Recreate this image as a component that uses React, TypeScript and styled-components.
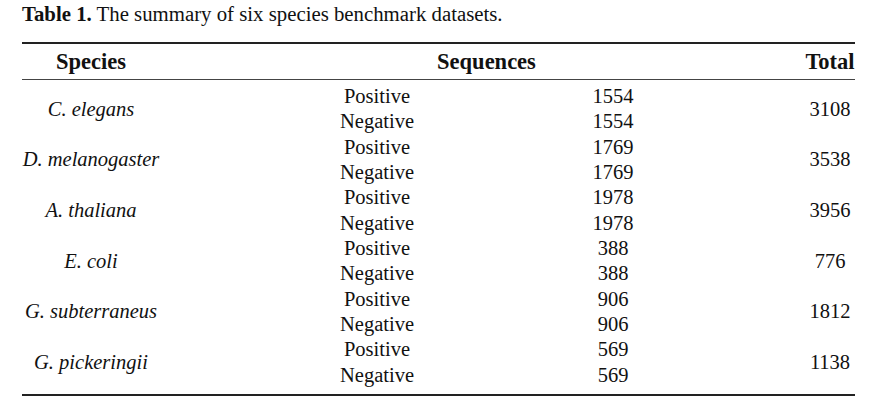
import React from "react";
import styled, { createGlobalStyle } from "styled-components";

const Global = createGlobalStyle`
  html, body { margin: 0; padding: 0; background: #fff; }
  body { font-family: "Liberation Serif", "Times New Roman", serif; color: #111; }
`;

const Page = styled.div`
  width: 880px;
  height: 411px;
  box-sizing: border-box;
  padding: 3px 25px 0 22px;
`;

const Caption = styled.div`
  font-size: 20.8px;
  line-height: 22px;
  height: 39px;
  b { font-weight: 700; }
`;

const Table = styled.div`
  display: flex;
  flex-direction: column;
  border-top: 2px solid #222;
  border-bottom: 2px solid #222;
`;

const Grid = styled.div`
  display: grid;
  grid-template-columns: 138px 160px 114px 139px 80px 152px 50px;
`;

const Head = styled(Grid)`
  height: 35px;
  border-bottom: 1px solid #444;
  font-weight: 700;
  font-size: 22.5px;
  align-items: center;
`;

const Body = styled(Grid)`
  grid-auto-rows: 25.33px;
  padding: 4px 0 6px;
  font-size: 20.5px;
`;

const HeadCell = styled.div<{ $col: string }>`
  grid-column: ${(p) => p.$col};
  display: flex;
  justify-content: center;
  white-space: nowrap;
`;

const Cell = styled.div<{ $col: string; $row: number; $span?: number; $italic?: boolean }>`
  grid-column: ${(p) => p.$col};
  grid-row: ${(p) => p.$row} / span ${(p) => p.$span ?? 1};
  display: flex;
  align-items: center;
  justify-content: center;
  white-space: nowrap;
  font-style: ${(p) => (p.$italic ? "italic" : "normal")};
`;

const data = [
  { sp: "C. elegans", n: 1554, t: 3108 },
  { sp: "D. melanogaster", n: 1769, t: 3538 },
  { sp: "A. thaliana", n: 1978, t: 3956 },
  { sp: "E. coli", n: 388, t: 776 },
  { sp: "G. subterraneus", n: 906, t: 1812 },
  { sp: "G. pickeringii", n: 569, t: 1138 },
];

export default function App() {
  return (
    <Page>
      <Global />
      <Caption>
        <b>Table 1.</b> The summary of six species benchmark datasets.
      </Caption>
      <Table>
        <Head>
          <HeadCell $col="1">Species</HeadCell>
          <HeadCell $col="3 / span 3">Sequences</HeadCell>
          <HeadCell $col="7">Total</HeadCell>
        </Head>
        <Body>
          {data.map((d, i) => {
            const r = 1 + i * 2;
            return (
              <React.Fragment key={d.sp}>
                <Cell $col="1" $row={r} $span={2} $italic>{d.sp}</Cell>
                <Cell $col="3" $row={r}>Positive</Cell>
                <Cell $col="3" $row={r + 1}>Negative</Cell>
                <Cell $col="5" $row={r}>{d.n}</Cell>
                <Cell $col="5" $row={r + 1}>{d.n}</Cell>
                <Cell $col="7" $row={r} $span={2}>{d.t}</Cell>
              </React.Fragment>
            );
          })}
        </Body>
      </Table>
    </Page>
  );
}
